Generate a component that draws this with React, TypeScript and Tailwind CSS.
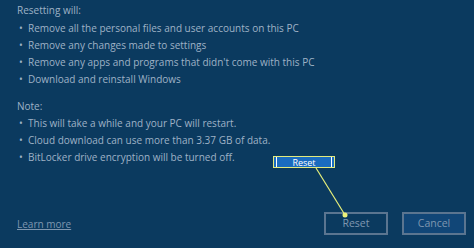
export default function App() {
  const willItems = [
    "Remove all the personal files and user accounts on this PC",
    "Remove any changes made to settings",
    "Remove any apps and programs that didn't come with this PC",
    "Download and reinstall Windows",
  ];
  const noteItems = [
    "This will take a while and your PC will restart.",
    "Cloud download can use more than 3.37 GB of data.",
    "BitLocker drive encryption will be turned off.",
  ];

  return (
    <div
      className="relative flex h-[248px] w-[474px] flex-col overflow-hidden bg-[#0b3a5f] pl-[17px] pr-[8px] pt-[2px] pb-[13px] text-[10px] leading-[17px] text-[#9fb2c6]"
      style={{ fontFamily: '"Open Sans", "Noto Sans", sans-serif' }}
    >
      <p>Resetting will:</p>
      <ul className="mt-[1px]">
        {willItems.map((t) => (
          <li key={t} className="flex">
            <span className="w-[11px] pl-[2px]">•</span>
            <span>{t}</span>
          </li>
        ))}
      </ul>
      <p className="mt-[10px]">Note:</p>
      <ul>
        {noteItems.map((t) => (
          <li key={t} className="flex">
            <span className="w-[11px] pl-[2px]">•</span>
            <span>{t}</span>
          </li>
        ))}
      </ul>

      <div className="mt-auto flex items-center justify-between">
        <a className="mt-[2px] text-[10px] text-[#7f97b0] underline">Learn more</a>
        <div className="flex gap-[14px]">
          <button className="h-[23px] w-[64px] border-2 border-[#5b7590] bg-[#0b3a5f] text-[10.5px] text-[#7f97b0]">
            Reset
          </button>
          <button className="h-[23px] w-[64px] border-2 border-[#5b7590] bg-[#114677] text-[10.5px] text-[#7f97b0]">
            Cancel
          </button>
        </div>
      </div>

      {/* callout annotation */}
      <svg className="absolute left-0 top-0" width="474" height="248">
        <line x1="316" y1="168" x2="345" y2="215" stroke="#e6ef7a" strokeWidth="1.2" />
        <circle cx="345" cy="215" r="2.5" fill="#eef27a" />
      </svg>
      <div className="absolute left-[273px] top-[156px] flex h-[12px] w-[62px] items-center justify-center border-[1.5px] border-[#e3ea7c] bg-[#1a6bbf]">
        <span className="absolute left-[2px] top-0 h-full w-[1px] bg-white" />
        <span className="absolute right-[2px] top-0 h-full w-[1px] bg-white" />
        <span className="text-[9px] leading-none text-white">Reset</span>
      </div>
    </div>
  );
}
